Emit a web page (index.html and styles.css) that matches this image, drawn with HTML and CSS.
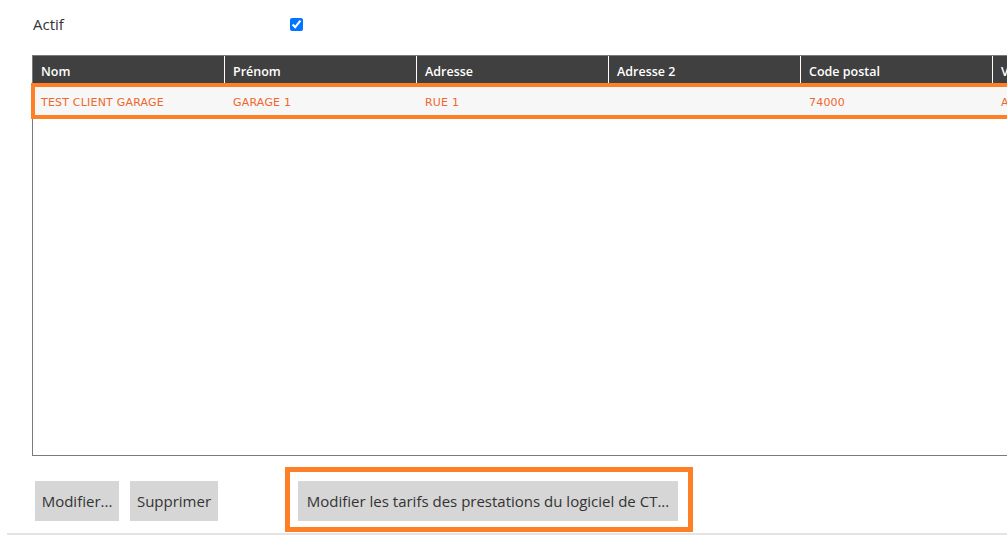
FILE: index.html
```html
<!DOCTYPE html>
<html lang="fr">
<head>
<meta charset="utf-8">
<title>Clients</title>
<link rel="stylesheet" href="styles.css">
</head>
<body>
<div class="page">
  <div class="form-row">
    <label class="label" for="actif">Actif</label>
    <input class="check" id="actif" type="checkbox" checked>
  </div>

  <div class="grid">
    <div class="grid-head">
      <div class="hcell">Nom</div>
      <div class="hcell">Prénom</div>
      <div class="hcell">Adresse</div>
      <div class="hcell">Adresse 2</div>
      <div class="hcell">Code postal</div>
      <div class="hcell">Ville</div>
    </div>
    <div class="grid-row">
      <div class="cell">TEST CLIENT GARAGE</div>
      <div class="cell">GARAGE 1</div>
      <div class="cell">RUE 1</div>
      <div class="cell"></div>
      <div class="cell">74000</div>
      <div class="cell">ANNECY</div>
    </div>
  </div>

  <div class="actions">
    <button class="btn btn-mod">Modifier...</button>
    <button class="btn btn-sup">Supprimer</button>
    <div class="highlight">
      <button class="btn btn-tarifs">Modifier les tarifs des prestations du logiciel de CT...</button>
    </div>
  </div>
  <div class="footer-line"></div>
</div>
</body>
</html>
```

FILE: styles.css
```css
html, body {
  margin: 0;
  padding: 0;
  background: #ffffff;
  overflow: hidden;
  width: 1007px;
  height: 538px;
}

.page {
  width: 1007px;
  height: 538px;
  overflow: hidden;
  font-family: "Open Sans", "Noto Sans", sans-serif;
  color: #333333;
}

.form-row {
  height: 48px;
  display: flex;
  align-items: center;
  padding-left: 33px;
}

.label {
  width: 257px;
  font-size: 15px;
  color: #333333;
  line-height: 20px;
  margin-top: 0;
}

.check {
  width: 13px;
  height: 13px;
  margin: 0;
  accent-color: #0075ff;
}

.grid {
  margin-top: 7px;
  margin-left: 32px;
  width: 1200px;
  height: 401px;
  box-sizing: border-box;
  border: 1px solid #7a7a7a;
  border-right: none;
}

.grid-head {
  display: flex;
  height: 27px;
  background: #404040;
}

.hcell {
  flex: none;
  border-right: 1px solid #ffffff;
  padding-left: 8px;
  box-sizing: content-box;
  width: 183px;
  color: #ffffff;
  font-family: "Open Sans", sans-serif;
  font-weight: 600;
  font-size: 12.5px;
  line-height: 31px;
  white-space: nowrap;
  overflow: hidden;
}

.grid-row {
  display: flex;
  height: 36px;
  box-sizing: border-box;
  border: 4px solid #ff7f27;
  border-right: none;
  margin-left: -2px;
  background: #f7f7f7;
}

.cell {
  flex: none;
  width: 186px;
  padding-left: 6px;
  color: #f0672d;
  font-family: "DejaVu Sans", sans-serif;
  font-size: 11px;
  letter-spacing: 0.2px;
  line-height: 31px;
  white-space: nowrap;
}

.actions {
  display: flex;
  align-items: flex-start;
  margin-top: 11px;
  padding-left: 35px;
}

.btn {
  margin-top: 14px;
  height: 40px;
  border: none;
  background: #d6d6d6;
  color: #333333;
  font-family: "Open Sans", "Noto Sans", sans-serif;
  font-size: 15px;
  padding: 0;
  box-sizing: border-box;
}

.btn-mod {
  width: 84px;
}

.btn-sup {
  width: 88px;
  margin-left: 11px;
}

.highlight {
  margin-left: 67px;
  border: 5px solid #ff7f27;
  padding: 9px 10px 6px 8px;
}

.highlight .btn {
  margin-top: 0;
}

.btn-tarifs {
  width: 380px;
}

.footer-line {
  margin-top: 1px;
  margin-left: 7px;
  height: 2px;
  background: #e4e4e4;
}
```
